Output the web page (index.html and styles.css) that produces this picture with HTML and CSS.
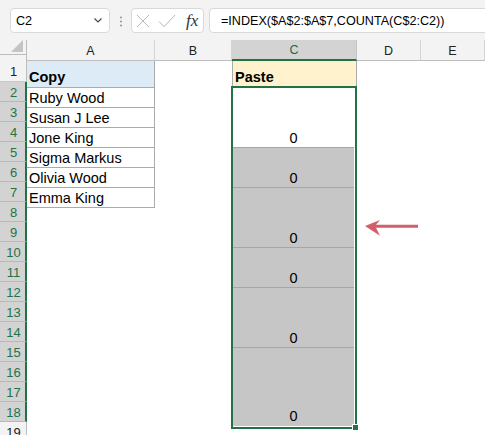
FILE: index.html
```html
<!DOCTYPE html>
<html>
<head>
<meta charset="utf-8">
<link rel="stylesheet" href="styles.css">
</head>
<body>
<div class="app">
  <div class="fbar">
    <div class="namebox"><span class="nb-text">C2</span><svg class="chev" width="8" height="5" viewBox="0 0 8 5"><polyline points="0.5,0.5 4,4 7.5,0.5" fill="none" stroke="#444" stroke-width="1.1"/></svg></div>
    <svg class="dots" width="4" height="25" viewBox="0 0 4 25"><circle cx="2" cy="9.5" r="0.9" fill="#8a8a8a"/><circle cx="2" cy="13.5" r="0.9" fill="#8a8a8a"/><circle cx="2" cy="17.5" r="0.9" fill="#8a8a8a"/></svg>
    <div class="fxbox">
      <svg class="ico-x" width="14" height="14" viewBox="0 0 14 14"><path d="M1 1L13 13M13 1L1 13" stroke="#b8b8b8" stroke-width="1" fill="none"/></svg>
      <svg class="ico-check" width="18" height="14" viewBox="0 0 18 14"><polyline points="1,7.5 6,12.7 17,1" fill="none" stroke="#b8b8b8" stroke-width="1"/></svg>
      <span class="fx">fx</span>
    </div>
    <div class="formula">=INDEX($A$2:$A$7,COUNTA(C$2:C2))</div>
  </div>
  <div class="sheet">
    <div class="col rh">
      <div class="corner"><svg width="12" height="12" viewBox="0 0 12 12"><polygon points="0,12 12,12 12,0" fill="#c4c4c4"/></svg></div>
      <div class="rn r1">1</div>
      <div class="rn rs">2</div>
      <div class="rn rs">3</div>
      <div class="rn rs">4</div>
      <div class="rn rs">5</div>
      <div class="rn rs">6</div>
      <div class="rn rs">7</div>
      <div class="rn rs">8</div>
      <div class="rn rs">9</div>
      <div class="rn rs">10</div>
      <div class="rn rs">11</div>
      <div class="rn rs">12</div>
      <div class="rn rs">13</div>
      <div class="rn rs">14</div>
      <div class="rn rs">15</div>
      <div class="rn rs">16</div>
      <div class="rn rs">17</div>
      <div class="rn rs">18</div>
      <div class="rn">19</div>
    </div>
    <div class="col ca">
      <div class="ch">A</div>
      <div class="cell r1 copy">Copy</div>
      <div class="cell">Ruby Wood</div>
      <div class="cell">Susan J Lee</div>
      <div class="cell">Jone King</div>
      <div class="cell">Sigma Markus</div>
      <div class="cell">Olivia Wood</div>
      <div class="cell">Emma King</div>
    </div>
    <div class="col cb"><div class="ch">B</div></div>
    <div class="col cc">
      <div class="ch ch-sel">C</div>
      <div class="cell r1 paste">Paste</div>
      <div class="sel">
        <div class="blk h3 first">0</div>
        <div class="blk h2">0</div>
        <div class="blk h3">0</div>
        <div class="blk h2">0</div>
        <div class="blk h3">0</div>
        <div class="blk last">0</div>
        <div class="handle"></div>
      </div>
    </div>
    <div class="col cd"><div class="ch">D</div></div>
    <div class="col ce"><div class="ch">E</div></div>
  </div>
  <svg class="arrow" width="54" height="22" viewBox="0 0 54 22"><polygon points="0,9 15,3 11,7.7 53,7.7 53,10.7 11,10.7 15,18.7" fill="#d35f6b"/></svg>
</div>
</body>
</html>
```
FILE: styles.css
```css
html, body {
  margin: 0;
  padding: 0;
  background: #fff;
}
body {
  width: 485px;
  height: 435px;
  overflow: hidden;
  font-family: "Liberation Sans", Arial, sans-serif;
}
.app {
  position: relative;
  width: 485px;
  height: 435px;
  overflow: hidden;
}
.fbar {
  height: 40px;
  box-sizing: border-box;
  background: #f3f3f3;
  display: flex;
  align-items: flex-start;
  padding-top: 8px;
  overflow: hidden;
}
.namebox {
  margin-left: 10px;
  width: 100px;
  height: 25px;
  box-sizing: border-box;
  border: 1px solid #d9d9d9;
  border-radius: 4px;
  background: #fff;
  display: flex;
  align-items: center;
  justify-content: space-between;
  padding: 1px 7px 0 5px;
  font-size: 12.6px;
  color: #000;
  flex-shrink: 0;
}
.chev { display: block; margin-top: -1px; }
.dots { display: block; margin-left: 9px; flex-shrink: 0; }
.fxbox {
  margin-left: 8px;
  width: 73px;
  height: 25px;
  box-sizing: border-box;
  border: 1px solid #d9d9d9;
  border-radius: 4px;
  background: #fff;
  display: flex;
  align-items: center;
  flex-shrink: 0;
}
.ico-x { display: block; margin-left: 4px; }
.ico-check { display: block; margin-left: 8px; }
.fx {
  margin-left: 10px;
  font-family: "Liberation Serif", "Times New Roman", serif;
  font-style: italic;
  font-size: 17px;
  color: #333;
  line-height: 17px;
  margin-top: -1px;
}
.formula {
  margin-left: 5px;
  width: 300px;
  height: 25px;
  box-sizing: border-box;
  border: 1px solid #d9d9d9;
  border-radius: 4px;
  background: #fff;
  padding: 1px 0 0 11px;
  font-size: 12.6px;
  color: #000;
  display: flex;
  align-items: center;
  flex-shrink: 0;
  white-space: nowrap;
}
.sheet {
  display: flex;
  height: 395px;
  overflow: hidden;
}
.col {
  display: flex;
  flex-direction: column;
  flex-shrink: 0;
}
.rh { width: 27px; }
.ca { width: 128px; }
.cb { width: 77px; }
.cc { width: 125px; }
.cd { width: 64px; }
.ce { width: 64px; }

.corner {
  height: 21px;
  box-sizing: border-box;
  background: #f3f3f3;
  border-right: 1px solid #bdbdbd;
  border-bottom: 1px solid #bdbdbd;
  display: flex;
  justify-content: flex-end;
  align-items: flex-end;
  padding: 0 3px 2px 0;
}
.corner svg { display: block; }

.ch {
  height: 21px;
  box-sizing: border-box;
  background: #f3f3f3;
  border-right: 1px solid #d4d4d4;
  border-bottom: 1px solid #bdbdbd;
  display: flex;
  align-items: center;
  justify-content: center;
  padding-top: 1px;
  font-size: 12.5px;
  color: #222;
  flex-shrink: 0;
}
.ch-sel {
  background: #d3d3d3;
  border-bottom: 2px solid #217346;
  border-right-color: #c4c4c4;
  color: #1b6b3f;
}

.rn {
  height: 20px;
  box-sizing: border-box;
  background: #f3f3f3;
  border-right: 1px solid #bdbdbd;
  border-bottom: 1px solid #c8c8c8;
  display: flex;
  align-items: flex-end;
  justify-content: center;
  padding: 0 0 1px 1px;
  font-size: 13px;
  line-height: 15px;
  color: #222;
  flex-shrink: 0;
}
.rn.r1 {
  height: 27px;
  padding-bottom: 2px;
}
.rn.rs {
  background: #d3d3d3;
  border-right: 2px solid #217346;
  border-bottom-color: #b8b8b8;
  color: #217346;
  padding-left: 2px;
}

.cell {
  height: 20px;
  box-sizing: border-box;
  border-right: 1px solid #ababab;
  border-bottom: 1px solid #ababab;
  display: flex;
  align-items: flex-end;
  padding-left: 2px;
  font-size: 14.5px;
  line-height: 17px;
  color: #000;
  white-space: nowrap;
  flex-shrink: 0;
}
.cell.r1 {
  height: 27px;
  padding-bottom: 1px;
  font-weight: bold;
}
.copy { background: #ddebf7; }
.paste {
  background: #fff2cc;
  border-left: 1px solid #ababab;
}

.sel {
  position: relative;
  width: 126px;
  height: 343px;
  margin-top: -2px;
  margin-left: -1px;
  box-sizing: border-box;
  border: 2px solid #217346;
  background: #fff;
  padding: 0 1px 1px 0;
  display: flex;
  flex-direction: column;
  flex-shrink: 0;
}
.blk {
  box-sizing: border-box;
  background: #c6c6c6;
  border-bottom: 1px solid #a6a6a6;
  display: flex;
  align-items: flex-end;
  justify-content: center;
  font-size: 14.5px;
  line-height: 17px;
  color: #000;
  flex-shrink: 0;
}
.blk.first { background: #fff; }
.blk.h3 { height: 60px; }
.blk.h2 { height: 40px; }
.blk.last {
  flex: 1;
  border-bottom: none;
  padding-bottom: 1px;
}
.handle {
  position: absolute;
  right: -3px;
  bottom: -3px;
  width: 5px;
  height: 5px;
  background: #217346;
  border-left: 1px solid #fff;
  border-top: 1px solid #fff;
}
.arrow {
  position: absolute;
  left: 365px;
  top: 217px;
  display: block;
}
```
